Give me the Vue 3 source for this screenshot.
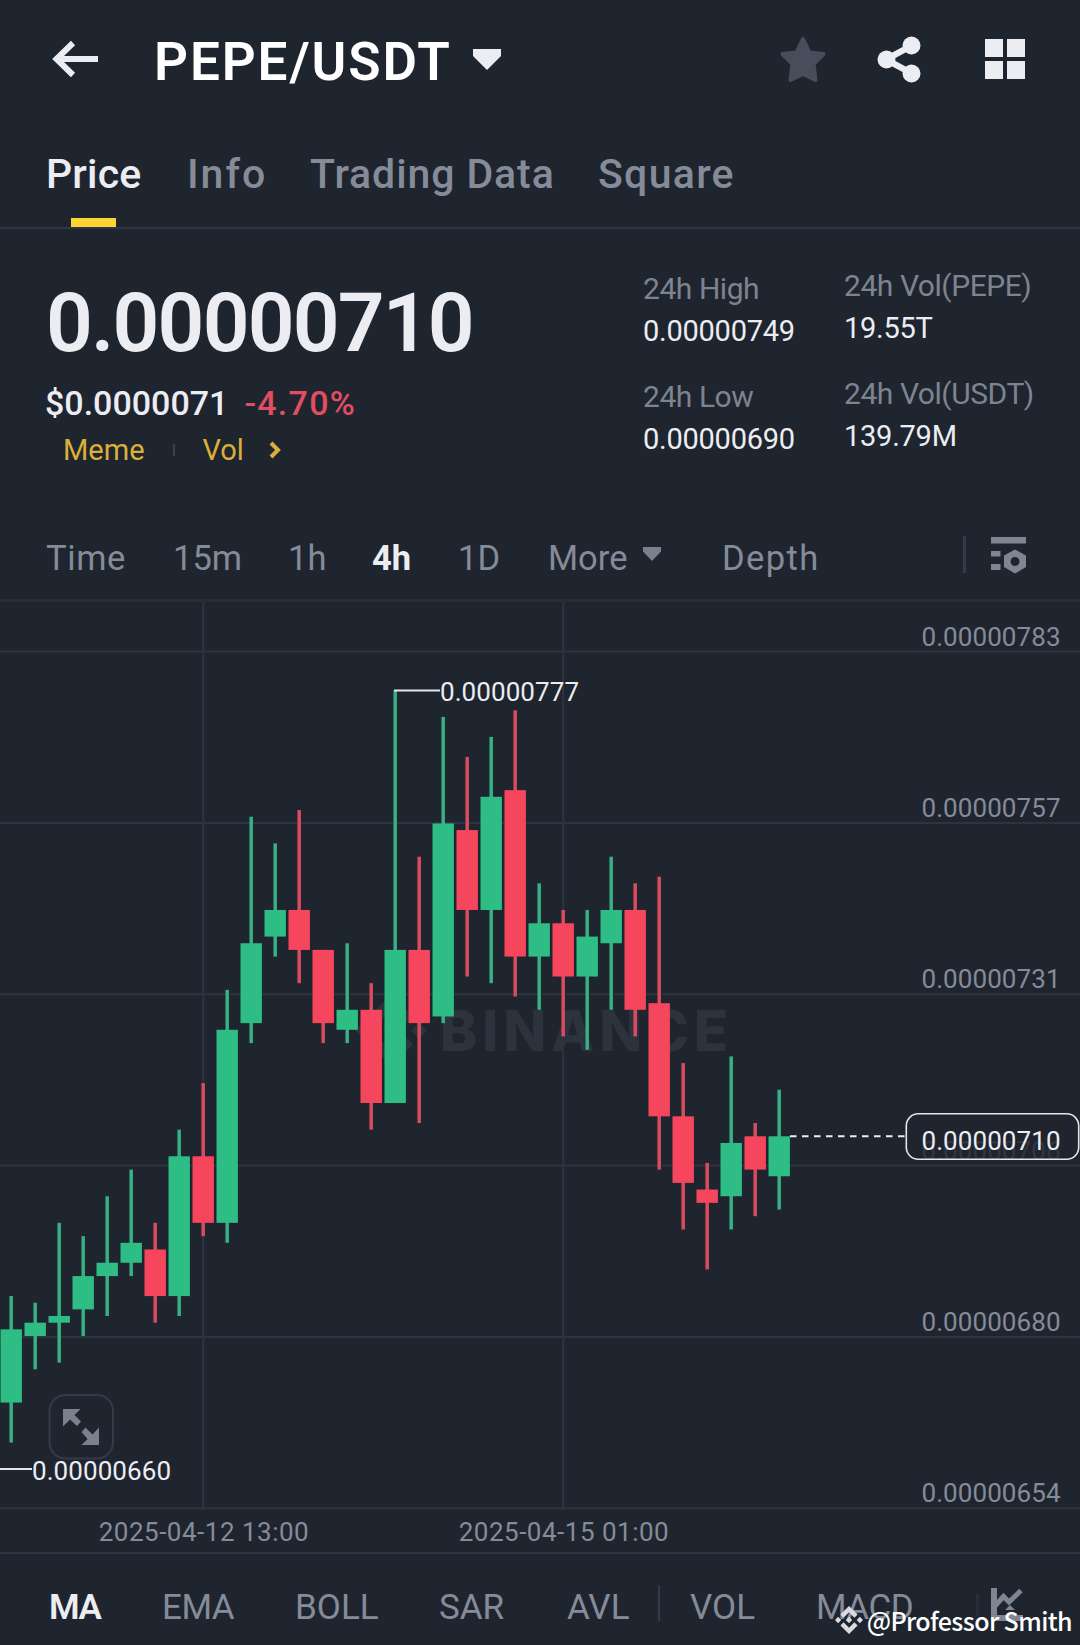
<template>
  <div class="page">
    <!-- Header -->
    <header class="header">
      <svg class="icon-back" width="46" height="38" viewBox="0 0 46 38">
        <path d="M4 19H46M21 3L4.500 19L21 35" fill="none" stroke="#ecedf2" stroke-width="6" />
      </svg>
      <h1 class="title">PEPE/USDT</h1>
      <svg class="title-caret" width="28" height="21" viewBox="0 0 28 21">
        <path d="M0 0H28V7L14 21L0 7Z" fill="#ecedf2" />
      </svg>
      <svg class="icon-star" width="46" height="47" viewBox="0 0 46 47">
        <path
          d="M23 3L29.500 16.500L43.500 18L33.500 28L35.500 44L23 38L10.500 44L12.500 28L2.500 18L16.500 16.500Z"
          fill="#474d5b" stroke="#474d5b" stroke-width="4" stroke-linejoin="round"
        />
      </svg>
      <svg class="icon-share" width="44" height="47" viewBox="0 0 44 47">
        <path d="M35 9.500L9 23.500L35 37.500" fill="none" stroke="#ecedf2" stroke-width="6.500" />
        <circle cx="34.500" cy="9.500" r="9" fill="#ecedf2" />
        <circle cx="9.500" cy="23.500" r="9" fill="#ecedf2" />
        <circle cx="34.500" cy="37.500" r="9" fill="#ecedf2" />
      </svg>
      <svg class="icon-grid" width="40" height="40" viewBox="0 0 40 40">
        <path d="M0 0H18V18H0ZM22 0H40V18H22ZM0 22H18V40H0ZM22 22H40V40H22Z" fill="#ecedf2" />
      </svg>
    </header>

    <!-- Tabs -->
    <nav class="tabs">
      <a
        v-for="tab in tabs"
        :key="tab"
        class="tab"
        :class="{ active: tab === currentTab }"
        @click="currentTab = tab"
      >{{ tab }}</a>
    </nav>

    <!-- Price summary -->
    <section class="summary">
      <div class="price-block">
        <div class="price">0.00000710</div>
        <div class="price-sub">
          <span class="usd">$0.0000071</span>
          <span class="change">-4.70%</span>
        </div>
        <div class="tags">
          <span class="tag tag-meme">Meme</span>
          <i class="tag-sep"></i>
          <span class="tag tag-vol">Vol</span>
          <svg width="12" height="18" viewBox="0 0 12 18">
            <path d="M2 2L9 9L2 16" fill="none" stroke="#dcae3a" stroke-width="4" />
          </svg>
        </div>
      </div>
      <div v-for="(col, i) in stats" :key="i" class="stats-col">
        <div v-for="item in col" :key="item.label" class="stat">
          <div class="stat-label">{{ item.label }}</div>
          <div class="stat-value">{{ item.value }}</div>
        </div>
      </div>
    </section>

    <!-- Intervals -->
    <nav class="intervals">
      <a
        v-for="item in intervals"
        :key="item"
        class="interval"
        :class="{ active: item === currentInterval }"
        @click="currentInterval = item"
      >{{ item }}</a>
      <a class="interval more">
        More
        <svg width="18" height="14" viewBox="0 0 18 14">
          <path d="M0 0H18V4.500L9 14L0 4.500Z" fill="#7a808e" />
        </svg>
      </a>
      <a class="interval depth">Depth</a>
      <i class="interval-sep"></i>
      <svg class="icon-settings" width="36" height="38" viewBox="0 0 36 38">
        <path d="M0 0H35V6.500H0ZM0 14H9.500V19.500H0ZM0 27H9.500V33H0Z" fill="#7f8592" />
        <path
          d="M24 12.500L35 18.500V30L24 36.500L13 30V18.500ZM24 20A4.500 4.500 0 1 0 24 29A4.500 4.500 0 1 0 24 20Z"
          fill="#7f8592" fill-rule="evenodd"
        />
      </svg>
    </nav>

    <!-- Candlestick chart -->
    <svg class="chart" width="1080" height="950" viewBox="0 602 1080 950">
      <g class="grid-lines">
        <line v-for="t in ticks" :key="t.label" x1="0" x2="1080" :y1="t.y" :y2="t.y" />
        <line v-for="d in dates" :key="d.label" :x1="d.x" :x2="d.x" y1="602" y2="1510" />
      </g>

      <g class="watermark">
        <g transform="translate(391 1030.500) scale(0.570)">
          <path :d="logoPath" />
        </g>
        <text x="440" y="1051" textLength="288">BINANCE</text>
      </g>

      <text
        v-for="t in ticks"
        :key="'t' + t.label"
        class="axis"
        :class="{ covered: t.covered }"
        x="921.500"
        :y="t.y - 6"
        textLength="139"
      >{{ t.label }}</text>

      <g v-for="c in candles" :key="c.x" :class="c.up ? 'up' : 'down'">
        <rect class="wick" :x="c.x - 1.750" :y="c.high" width="3.500" :height="c.low - c.high" />
        <rect :x="c.x - 10.700" :y="c.top" width="21.400" :height="c.bottom - c.top" />
      </g>

      <!-- High / low markers -->
      <line class="marker-line" x1="394" x2="440" y1="690.500" y2="690.500" />
      <text class="marker" x="440" y="700.700" textLength="139">0.00000777</text>
      <line class="marker-line" x1="0" x2="32" y1="1469" y2="1469" />

      <!-- Fullscreen button -->
      <rect class="expand" x="49.500" y="1395" width="63.500" height="63.500" rx="16" />
      <path
        class="expand-icon"
        d="M63 1409H80.500L74.500 1415L81 1421.500L77 1426L70 1419.500L63 1426.500ZM99 1445H81.500L87.500 1439L81.500 1432L85.500 1427.500L92.500 1434.500L99 1427.500Z"
      />
      <text class="marker" x="32" y="1480" textLength="139">0.00000660</text>

      <!-- Last price -->
      <line class="last-line" x1="790" x2="905" y1="1136.300" y2="1136.300" />
      <rect class="last-box" x="906.300" y="1113.800" width="172.400" height="45.500" rx="12" />
      <text class="marker" x="921.500" y="1149.700" textLength="139">0.00000710</text>

      <text
        v-for="d in dates"
        :key="'d' + d.label"
        class="axis"
        :x="d.x - 104.500"
        y="1541"
        textLength="210"
      >{{ d.label }}</text>
    </svg>

    <!-- Indicators -->
    <footer class="indicators">
      <a
        v-for="item in indicators"
        :key="item"
        class="indicator"
        :class="{ active: item === currentIndicator }"
        @click="currentIndicator = item"
      >{{ item }}</a>
      <i class="indicator-sep"></i>
      <svg class="icon-chart" width="32" height="33" viewBox="0 0 32 33">
        <path d="M0 0H6V27H32V33H0Z" />
        <path d="M4 18L12.500 8.500L18 14L30 2.500" fill="none" stroke="#7f8592" stroke-width="5" />
        <path d="M14 22L19 17L24 22Z" />
      </svg>
      <div class="credit">
        <svg width="28" height="28" viewBox="-63.300 -63.300 126.600 126.600">
          <path :d="logoPath" fill="#d9dbdf" />
        </svg>
        <span>@Professor Smith</span>
      </div>
    </footer>
  </div>
</template>

<script setup>
import { ref, computed } from 'vue'

const tabs = ['Price', 'Info', 'Trading Data', 'Square']
const currentTab = ref('Price')

const intervals = ['Time', '15m', '1h', '4h', '1D']
const currentInterval = ref('4h')

const indicators = ['MA', 'EMA', 'BOLL', 'SAR', 'AVL', 'VOL', 'MACD']
const currentIndicator = ref('MA')

const stats = [
  [
    { label: '24h High', value: '0.00000749' },
    { label: '24h Low', value: '0.00000690' }
  ],
  [
    { label: '24h Vol(PEPE)', value: '19.55T' },
    { label: '24h Vol(USDT)', value: '139.79M' }
  ]
]

// Binance mark, centred on 0,0
const logoPath =
  'M-24.500 -10.300L0 -34.800L24.500 -10.300L38.800 -24.500L0 -63.300L-38.800 -24.500Z' +
  'M-63.300 0L-49.100 -14.200L-34.900 0L-49.100 14.200Z' +
  'M-24.500 10.300L0 34.800L24.500 10.300L38.800 24.500L0 63.300L-38.800 24.500Z' +
  'M34.900 0L49.100 -14.200L63.300 0L49.100 14.200Z' +
  'M-14.500 0L0 -14.500L14.500 0L0 14.500Z'

const ticks = [
  { label: '0.00000783', y: 651.5 },
  { label: '0.00000757', y: 823 },
  { label: '0.00000731', y: 994.3 },
  { label: '0.00000706', y: 1165.5, covered: true },
  { label: '0.00000680', y: 1337 },
  { label: '0.00000654', y: 1508.3 }
]

const dates = [
  { label: '2025-04-12 13:00', x: 203.2 },
  { label: '2025-04-15 01:00', x: 563.2 }
]

// [open, high, low, close], in units of 0.00000001
const ohlc = [
  [670, 686, 664, 681], [680, 685, 675, 682], [682, 697, 676, 683],
  [684, 695, 680, 689], [689, 701, 683, 691], [691, 705, 689, 694],
  [693, 697, 682, 686], [686, 711, 683, 707], [707, 718, 695, 697],
  [697, 732, 694, 726], [727, 758, 724, 739], [740, 754, 737, 744],
  [744, 759, 733, 738], [738, 738, 724, 727], [726, 739, 724, 729],
  [729, 733, 711, 715], [715, 777, 715, 738], [738, 752, 712, 727],
  [728, 773, 727, 757], [756, 767, 734, 744], [744, 770, 733, 761],
  [762, 774, 731, 737], [737, 748, 729, 742], [742, 744, 725, 734],
  [734, 744, 723, 740], [739, 752, 729, 744], [744, 748, 725, 729],
  [730, 749, 705, 713], [713, 721, 696, 703], [702, 706, 690, 700],
  [701, 722, 696, 709], [710, 712, 698, 705], [704, 717, 699, 710]
]

const toY = (p) => 1136.3 - (p - 710) * 6.657

const candles = computed(() =>
  ohlc.map(([open, high, low, close], i) => ({
    x: 11.2 + i * 24,
    up: close > open,
    high: toY(high),
    low: toY(low),
    top: toY(Math.max(open, close)),
    bottom: toY(Math.min(open, close))
  }))
)
</script>

<style>
body {
  margin: 0;
  background: #1f252f;
}
</style>

<style scoped>
.page {
  width: 1080px;
  height: 1645px;
  overflow: hidden;
  background: #1f252f;
  color: #ecedf2;
  font-family: Roboto, "Liberation Sans", sans-serif;
}

svg {
  display: block;
  flex: none;
}

/* Header */
.header {
  display: flex;
  align-items: center;
  height: 118px;
  padding: 0 55px 0 52px;
}

.title {
  margin: 0 0 0 56px;
  padding-top: 6px;
  width: 319px;
  font-size: 53px;
  font-weight: 600;
  letter-spacing: 1.9px;
  line-height: 60px;
  color: #fff;
}

.icon-star {
  margin-left: auto;
}

.icon-share {
  margin-left: 51px;
}

.icon-grid {
  margin-left: 64px;
}

/* Tabs */
.tabs {
  box-sizing: border-box;
  display: grid;
  grid-template-columns: 141px 123px 288px auto;
  height: 111px;
  padding-left: 46px;
  border-bottom: 2px solid #2f3641;
  font-size: 41px;
  font-weight: 500;
  letter-spacing: 0.9px;
  line-height: 112px;
  color: #858b98;
}

.tab {
  position: relative;
  justify-self: start;
  height: 109px;
  white-space: nowrap;
}

.tab:nth-child(2) {
  letter-spacing: 2px;
}

.tab:nth-child(4) {
  letter-spacing: 1.3px;
}

.tab.active {
  letter-spacing: 0.2px;
  color: #ecedf2;
}

.tab.active::after {
  content: "";
  position: absolute;
  left: 50%;
  bottom: 0;
  width: 45px;
  height: 9px;
  margin-left: -23px;
  background: #fcd535;
}

/* Summary */
.summary {
  display: grid;
  grid-template-columns: 598px 201px auto;
  height: 277px;
  padding-left: 45px;
}

.price {
  margin: 49px 0 0 1px;
  font-size: 82px;
  font-weight: 600;
  letter-spacing: -1.8px;
  line-height: 90px;
}

.price-sub {
  display: flex;
  gap: 16px;
  margin-top: 13px;
  font-size: 34px;
  font-weight: 500;
  line-height: 44px;
}

.change {
  letter-spacing: 1.3px;
  color: #e24d61;
}

.tags {
  display: flex;
  align-items: center;
  margin-top: 5px;
  padding-left: 18px;
  font-size: 29px;
  line-height: 40px;
  color: #dcae3a;
}

.tag-sep {
  width: 2px;
  height: 12px;
  margin: 0 28px;
  background: #3a414d;
}

.tag-vol {
  margin-right: 25px;
}

.stats-col {
  display: flex;
  flex-direction: column;
  gap: 24px;
  padding-top: 39px;
  line-height: 42px;
  white-space: nowrap;
}

.stats-col:last-child {
  padding-top: 36px;
}

.stat-label {
  font-size: 30px;
  letter-spacing: -0.45px;
  color: #7d838f;
}

.stat-value {
  font-size: 29px;
  letter-spacing: -0.25px;
}

/* Intervals */
.intervals {
  box-sizing: border-box;
  display: grid;
  grid-template-columns: 127px 115px 84px 86px 90px 174px 241px 28px auto;
  height: 96px;
  padding-left: 46px;
  border-bottom: 3px solid #272e38;
  font-size: 34.5px;
  line-height: 104px;
  color: #858b98;
}

.interval {
  height: 90px;
}

.interval:first-child {
  letter-spacing: 0.6px;
}

.interval.active {
  font-weight: 700;
  color: #ecedf2;
}

.more {
  display: flex;
  gap: 16px;
}

.more svg {
  margin-top: 41px;
}

.depth {
  letter-spacing: 1.4px;
}

.interval-sep {
  width: 3px;
  height: 37px;
  margin-top: 30px;
  background: #343b46;
}

.icon-settings {
  margin-top: 31px;
}

/* Chart */
.grid-lines line {
  stroke: #2d343f;
  stroke-width: 2;
}

.watermark {
  fill: #2c333d;
  font-family: Inter, sans-serif;
  font-size: 56px;
  font-weight: 800;
}

.axis {
  fill: #858b98;
  font-size: 26px;
}

.axis.covered {
  fill: #4a515d;
}

.marker {
  fill: #ecedf2;
  font-size: 26px;
}

.marker-line {
  stroke: #e3e5ea;
  stroke-width: 2;
}

.up {
  fill: #2ebd85;
}

.down {
  fill: #f6465d;
}

.up .wick {
  fill: #37b083;
}

.down .wick {
  fill: #dc4a60;
}

.expand {
  fill: none;
  stroke: #343b46;
  stroke-width: 2;
}

.expand-icon {
  fill: #7a808e;
}

.last-line {
  stroke: #ecedf2;
  stroke-width: 2;
  stroke-dasharray: 6.5 5.5;
}

.last-box {
  fill: #1f252f;
  fill-opacity: 0.6;
  stroke: #e3e5ea;
  stroke-width: 1.6;
}

/* Indicators */
.indicators {
  position: relative;
  box-sizing: border-box;
  display: grid;
  grid-template-columns: 113px 133px 144px 128px 122px 127px 160px 15px auto;
  height: 93px;
  padding-left: 49px;
  border-top: 2px solid #2f3641;
  font-size: 35px;
  line-height: 107px;
  color: #858b98;
}

.indicator {
  white-space: nowrap;
}

.indicator:nth-child(2),
.indicator:nth-child(7) {
  letter-spacing: -0.5px;
}

.indicator.active {
  font-weight: 600;
  letter-spacing: -1.5px;
  color: #ecedf2;
}

.indicator:nth-child(5)::after {
  content: "";
  display: inline-block;
  width: 2px;
  height: 36px;
  margin-left: 29px;
  vertical-align: -2px;
  background: #343b46;
}

.indicator:nth-child(6) {
  padding-left: 1px;
}

.indicator-sep {
  width: 3px;
  height: 22px;
  margin-top: 40px;
  background: #272e38;
}

.icon-chart {
  margin-top: 34px;
  fill: #7f8592;
}

/* Author label lies over the indicator bar */
.credit {
  position: absolute;
  right: 8px;
  bottom: 8px;
  display: flex;
  align-items: center;
  gap: 4px;
  font-family: "Noto Sans CJK SC", "Noto Sans", sans-serif;
  font-size: 25px;
  font-weight: 500;
  letter-spacing: -0.6px;
  line-height: 34px;
  color: #fff;
}
</style>
